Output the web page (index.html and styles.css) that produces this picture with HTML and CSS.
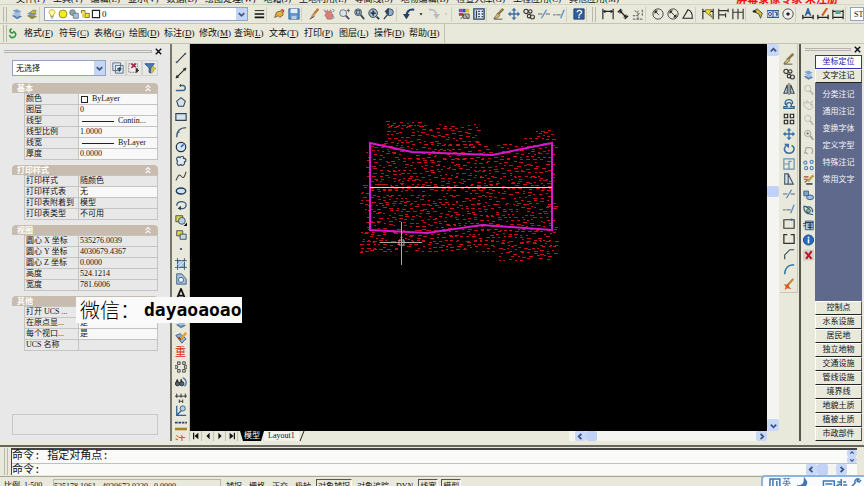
FILE: index.html
```html
<!DOCTYPE html>
<html lang="zh-CN">
<head>
    <meta charset="UTF-8">
    <title>CASS</title>
    <link rel="stylesheet" href="styles.css">
</head>
<body>
    <!-- 图标 -->
    <svg class="defs">
        <symbol id="layers" viewBox="0 0 14 14"><path d="M1 9l6-2 6 3-6 3z" fill="#5b7fae"/><path d="M1 6l6-2 6 3-6 3z" fill="#9db8d8" stroke="#fff" stroke-width=".5"/><path d="M1 3l6-2 6 3-6 3z" fill="#7ea0cc" stroke="#fff" stroke-width=".5"/></symbol>
        <symbol id="layerprev" viewBox="0 0 14 14"><path d="M1 9l5-2 7 3-6 3z" fill="#8a8a40"/><path d="M1 6l6-2 6 3-6 3z" fill="#7ea0cc"/><path d="M5 7c1-5 5-5 7-4l-2 4z" fill="#cbb838" stroke="#555" stroke-width=".6"/></symbol>
        <symbol id="bulb" viewBox="0 0 14 14"><path d="M7 1c5 0 5 5 2 7v2H5V8C2 6 2 1 7 1z" fill="#fff9a0" stroke="#b09020"/><path d="M5 11h4M6 13h2" stroke="#555"/></symbol>
        <symbol id="sun" viewBox="0 0 14 14"><circle cx="7" cy="7" r="5.5" fill="#f4ee20" stroke="#8a8a20" stroke-width="1.3"/></symbol>
        <symbol id="freeze" viewBox="0 0 14 14"><circle cx="5" cy="5" r="4" fill="#90a8a0" stroke="#567"/><path d="M6 6h7v7H6z" fill="#a8c4dc" stroke="#567"/></symbol>
        <symbol id="lock" viewBox="0 0 14 14"><path d="M2 6V2h5v3M7 6h6v6H7z" fill="#eee040" stroke="#887820" stroke-width="1.4"/><path d="M3 6h4v6H3z" fill="#d8cf50"/></symbol>
        <symbol id="swatch" viewBox="0 0 14 14"><path d="M2 2h10v10H2z" fill="#fff" stroke="#222" stroke-width="1.6"/></symbol>
        <symbol id="lines" viewBox="0 0 14 14"><path d="M2 3h11" stroke="#111"/><path d="M2 7h11M2 11h11" stroke="#111" stroke-width="2"/></symbol>
        <symbol id="matchprop" viewBox="0 0 14 14"><path d="M2 11l2-6 6-2 2 5-4 3-2-2z" fill="#e0b040" stroke="#7a5a20"/><path d="M9 1l4 1v4z" fill="#c04030"/></symbol>
        <symbol id="save" viewBox="0 0 14 14"><path d="M1 1h12v12H1z" fill="#5c8fcb" stroke="#345f98"/><path d="M3 1h8v5H3z" fill="#e4eefa"/><path d="M4 9h6v4H4z" fill="#b8cce4"/></symbol>
        <symbol id="brush" viewBox="0 0 14 14"><path d="M12 1L7 7" stroke="#c08030" stroke-width="3"/><path d="M8 6l-3 1-3 6 6-3z" fill="#b8a078"/><path d="M2 13l5-3" stroke="#444"/></symbol>
        <symbol id="pan" viewBox="0 0 14 14"><path d="M1 2l4 3V2l2 3 2-3 1 4 2 2-2 5H5L2 8l2-1z" fill="#d88078" stroke="#a05858" stroke-width=".6"/><path d="M11 1l2 2-2 2M11 9l2 2-2 2" stroke="#446c98" fill="none"/></symbol>
        <symbol id="zoomrt" viewBox="0 0 14 14"><circle cx="6" cy="6" r="4" fill="#d8e4e8" stroke="#667"/><path d="M9 9l4 4" stroke="#446" stroke-width="2"/><path d="M10 3h4M12 1v4" stroke="#456"/></symbol>
        <symbol id="zoomwin" viewBox="0 0 14 14"><circle cx="6" cy="5" r="4" fill="#a8bccc" stroke="#456"/><path d="M4 3h4v4H4z" fill="none" stroke="#345"/><path d="M9 8l4 5" stroke="#345" stroke-width="2"/></symbol>
        <symbol id="zoomall" viewBox="0 0 14 14"><circle cx="6" cy="6" r="5" fill="#a8bccc" stroke="#234"/><path d="M3 6h6M6 3v6" stroke="#123" stroke-width="1.5"/><path d="M10 10l3 3" stroke="#234" stroke-width="2"/></symbol>
        <symbol id="zoomprev" viewBox="0 0 14 14"><circle cx="8" cy="5" r="4" fill="#8fb0d4" stroke="#345"/><path d="M5 8l-4 5M3 4l3-3v6z" stroke="#345" stroke-width="1.6" fill="#345"/></symbol>
        <symbol id="undo" viewBox="0 0 14 14"><path d="M13 2C7 1 4 4 4 11" fill="none" stroke="#23406c" stroke-width="2.4"/><path d="M0 7l4 6 4-6z" fill="#23406c"/></symbol>
        <symbol id="redo" viewBox="0 0 14 14"><path d="M1 2c6-1 9 2 9 9" fill="none" stroke="#b8bcc0" stroke-width="2"/><path d="M6 7l4 6 4-6z" fill="#b8bcc0"/></symbol>
        <symbol id="dot" viewBox="0 0 14 14"><path d="M5 6h4L7 9z" fill="#111"/></symbol>
        <symbol id="dotoff" viewBox="0 0 14 14"><path d="M5 6h4L7 9z" fill="#c4c4bc"/></symbol>
        <symbol id="props" viewBox="0 0 14 14"><path d="M1 1h4v4H1z" fill="#c030c0"/><path d="M5 1h4v4H5z" fill="#3050c0"/><path d="M9 1h4v4H9z" fill="#e0c020"/><path d="M1 6h5v3H1z" fill="#c03020"/><path d="M6 7h7v5H6zM3 13l4-5M12 13L8 8" fill="#b8b8c0" stroke="#444"/></symbol>
        <symbol id="dcenter" viewBox="0 0 14 14"><path d="M1 1h12v12H1z" fill="#dfe8f4" stroke="#246" stroke-width="1.5"/><path d="M4 3v9M6 4h2M10 4h2M6 7h2M10 7h2M6 10h2M10 10h2" stroke="#345" stroke-width="1.5"/></symbol>
        <symbol id="erase" viewBox="0 0 14 14"><path d="M12 1L5 8" stroke="#8a7a50" stroke-width="3"/><path d="M6 6l2 3-4 3H1z" fill="#d8c060" stroke="#765"/><path d="M1 13h10" stroke="#444"/></symbol>
        <symbol id="move" viewBox="0 0 14 14"><path d="M7 1v12M1 7h12" stroke="#3d6ea5" stroke-width="1.6"/><path d="M7 0l3 3H4zM7 14l3-3H4zM0 7l3-3v6zM14 7l-3-3v6z" fill="#3d6ea5"/></symbol>
        <symbol id="copy" viewBox="0 0 14 14"><g fill="none" stroke="#333" stroke-width="1.3"><circle cx="3.5" cy="4" r="2.5"/><circle cx="8.5" cy="4" r="2"/><circle cx="7" cy="9.5" r="2"/><circle cx="11" cy="10.5" r="2.3"/></g></symbol>
        <symbol id="trim" viewBox="0 0 14 14"><path d="M0 7h5M9 7h5" stroke="#456"/><path d="M10 2L4 12" stroke="#5a8cc0" stroke-width="1.5"/></symbol>
        <symbol id="extend" viewBox="0 0 14 14"><path d="M0 8h3M4 8h5" stroke="#456"/><path d="M13 2L9 12" stroke="#5a8cc0" stroke-width="1.5"/></symbol>
        <symbol id="help" viewBox="0 0 14 14"><path d="M1 1h12v12H1z" fill="#2d5f9f" stroke="#1c3f70"/><path d="M5 5c0-3 5-3 5 0 0 2-3 1.5-3 4M7 10v2" stroke="#fff" stroke-width="1.6" fill="none"/></symbol>
        <symbol id="dimlin" viewBox="0 0 14 14"><path d="M1 1v12M13 1v12M1 4h12" stroke="#222" stroke-width="1.3"/><path d="M1 4l3-2v4zM13 4l-3-2v4z" fill="#222"/></symbol>
        <symbol id="dimali" viewBox="0 0 14 14"><path d="M1 5l4-4M9 13l4-4M3 3l8 8" stroke="#222" stroke-width="1.5"/><path d="M3 3h4L3 7zM11 11H7l4-4z" fill="#222"/></symbol>
        <symbol id="dimord" viewBox="0 0 14 14"><path d="M1 13h12M1 9h5l3-3M7 13V3M12 2v8M3 3l4 3" stroke="#444" fill="none" stroke-dasharray="3 1"/></symbol>
        <symbol id="dimrad" viewBox="0 0 14 14"><circle cx="7" cy="7" r="6" fill="none" stroke="#333"/><path d="M4 4l4 4" stroke="#222"/><path d="M3 3h4L3 7z" fill="#222"/></symbol>
        <symbol id="dimdia" viewBox="0 0 14 14"><circle cx="7" cy="7" r="6" fill="none" stroke="#333"/><path d="M4 4l6 6" stroke="#222"/><path d="M3 3h4L3 7zM11 11H7l4-4z" fill="#222"/></symbol>
        <symbol id="dimang" viewBox="0 0 14 14"><path d="M13 12H1L7 2c4 1 5 4 5 9" fill="none" stroke="#222" stroke-width="1.3"/></symbol>
        <symbol id="qdim" viewBox="0 0 14 14"><path d="M1 1v12M13 1v12M1 4h12" stroke="#222" stroke-width="1.3"/><path d="M4 2h7l-2 4 3 5-8-6z" fill="#e8dc30" stroke="#777020"/></symbol>
        <symbol id="dimbase" viewBox="0 0 14 14"><path d="M2 1v12M2 3h11M2 8h8M13 1v4M10 6v5" stroke="#333" stroke-width="1.3"/></symbol>
        <symbol id="dimcont" viewBox="0 0 14 14"><path d="M1 1v12M7 1v12M13 1v12M1 5h12" stroke="#333" stroke-width="1.3"/></symbol>
        <symbol id="leader" viewBox="0 0 14 14"><path d="M1 4l5-3 6 5-2 6-2-5z" fill="#d0c040" stroke="#444"/><path d="M1 4h4" stroke="#222" stroke-width="2"/></symbol>
        <symbol id="toler" viewBox="0 0 14 14"><path d="M0 3h14v8H0zM7 3v8" fill="#d8e8f8" stroke="#2f5f9c" stroke-width="1.3"/><circle cx="3.5" cy="7" r="1.8" fill="none" stroke="#246"/><path d="M9 5h2v4M12 5v4" stroke="#246" fill="none"/></symbol>
        <symbol id="center" viewBox="0 0 14 14"><circle cx="7" cy="7" r="6" fill="#eee" stroke="#444"/><path d="M7 5v4M5 7h4" stroke="#111" stroke-width="1.5"/></symbol>
        <symbol id="dimedit" viewBox="0 0 14 14"><path d="M1 8v5M13 8v5M1 11h12" stroke="#222" stroke-width="1.5"/><path d="M4 9l3-8 3 8M5 6h4" stroke="#2f5f9c" stroke-width="1.8" fill="none"/></symbol>
        <symbol id="dimtedit" viewBox="0 0 14 14"><path d="M1 8v5M13 8v5M1 11h12" stroke="#222" stroke-width="1.5"/><path d="M12 0L6 9" stroke="#d06028" stroke-width="2.5"/></symbol>
        <symbol id="dimupd" viewBox="0 0 14 14"><path d="M1 2v11M13 2v11M1 11h12M1 4h12" stroke="#222" stroke-width="1.3"/><path d="M4 3h6v4H4z" fill="#58a090"/></symbol>
        <symbol id="reload" viewBox="0 0 14 14"><path d="M6 1C2 3 4 7 8 6M8 4l3 3c1 3-2 6-6 5M3 9l2 3" fill="none" stroke="#2f9440" stroke-width="2"/></symbol>
        <symbol id="pickadd" viewBox="0 0 14 14"><path d="M1 1h9v9H1zM4 4h9v9H4z" fill="#e4edf6" stroke="#48617c"/><path d="M6 8h5M8.5 6v5" stroke="#235" stroke-width="1.3"/></symbol>
        <symbol id="select" viewBox="0 0 14 14"><path d="M1 2h10v10H1z" fill="#eee" stroke="#777" stroke-dasharray="2 1"/><path d="M4 2l5 4M9 2L4 7" stroke="#b02040" stroke-width="2"/><path d="M9 6v7l4-3z" fill="#333"/></symbol>
        <symbol id="quick" viewBox="0 0 14 14"><path d="M1 2h11L8 7v6L6 12V7z" fill="#487cb4" stroke="#2c5080"/><path d="M11 5L8 9h3l-2 4 5-6h-3z" fill="#e8d820" stroke="#998a20" stroke-width=".6"/></symbol>

        <symbol id="line" viewBox="0 0 14 14"><path d="M2 12L12 2" stroke="#333" stroke-width="1.2"/><circle cx="2" cy="12" r="1.2" fill="#456a90"/><circle cx="12" cy="2" r="1.2" fill="#456a90"/></symbol>
        <symbol id="xline" viewBox="0 0 14 14"><path d="M1 13L13 1" stroke="#222" stroke-width="1.3"/><path d="M1 13l1-4 3 3zM13 1l-1 4-3-3z" fill="#222"/></symbol>
        <symbol id="pline" viewBox="0 0 14 14"><path d="M1 10h8c4 0 4-6 0-6H7" fill="none" stroke="#3b678a" stroke-width="1.7"/><path d="M7 2v4L5 4z" fill="#333"/></symbol>
        <symbol id="polygon" viewBox="0 0 14 14"><path d="M7 2l5 4-2 6H4L2 6z" fill="#d5e2ee" stroke="#345" stroke-width="1.2"/></symbol>
        <symbol id="rect" viewBox="0 0 14 14"><path d="M1 3h12v8H1z" fill="#d5e2ee" stroke="#345" stroke-width="1.3"/></symbol>
        <symbol id="arc" viewBox="0 0 14 14"><path d="M2 13C2 6 6 2 13 2" fill="none" stroke="#456" stroke-width="1.5"/><circle cx="4" cy="7" r="1.4" fill="#4878a8"/></symbol>
        <symbol id="circle" viewBox="0 0 14 14"><circle cx="7" cy="7" r="5.5" fill="#d5e6f6" stroke="#234" stroke-width="1.4"/><path d="M7 7l3-3" stroke="#26c" stroke-width="2"/></symbol>
        <symbol id="cloud" viewBox="0 0 14 14"><path d="M3 7c-3-3 1-6 3-4 2-3 5-1 4 1 4 0 3 4 1 4 1 4-3 5-4 3-3 3-6-1-4-4z" fill="#e4ecf2" stroke="#345" stroke-width="1.3"/></symbol>
        <symbol id="spline" viewBox="0 0 14 14"><path d="M1 12c2-2 3-9 6-5s4 1 6-5" fill="none" stroke="#444" stroke-width="1.2"/></symbol>
        <symbol id="ellipse" viewBox="0 0 14 14"><ellipse cx="7" cy="7" rx="5.5" ry="3.5" fill="#d0e2ee" stroke="#1f3c58" stroke-width="1.6"/></symbol>
        <symbol id="earc" viewBox="0 0 14 14"><path d="M2 8c0-7 11-6 11-1 0 3-3 5-6 4" fill="none" stroke="#345a80" stroke-width="1.5"/><path d="M7 8v5l-4-2z" fill="#345"/></symbol>
        <symbol id="insert" viewBox="0 0 14 14"><path d="M1 2h8v7H1z" fill="#d6d848" stroke="#444"/><circle cx="8" cy="8" r="4" fill="#b8cfe0" stroke="#345"/><path d="M14 10v4h-4z" fill="#111"/></symbol>
        <symbol id="block" viewBox="0 0 14 14"><path d="M2 2h7v6H2z" fill="#d6d848" stroke="#444"/><path d="M6 6h7v6H6z" fill="#c8d8e4" stroke="#345"/></symbol>
        <symbol id="point" viewBox="0 0 14 14"><circle cx="7" cy="7" r="1.3" fill="#246"/></symbol>
        <symbol id="hatch" viewBox="0 0 14 14"><path d="M3 0v14M11 0v14M0 3h14M0 11h14" stroke="#357"/><path d="M3 3h8v8H3z" fill="#9fc0e0" stroke="#357"/><path d="M3 8l5-5M4 11l7-7" stroke="#fff"/></symbol>
        <symbol id="region" viewBox="0 0 14 14"><path d="M2 1h6l5 6v6H2z" fill="#a8c6e0" stroke="#357"/><circle cx="7" cy="8" r="3" fill="#eef" stroke="#357"/></symbol>
        <symbol id="text" viewBox="0 0 14 14"><path d="M2 13L7 1l5 12M4 9h6" stroke="#111" stroke-width="2" fill="none"/></symbol>
        <symbol id="pencil" viewBox="0 0 14 14"><path d="M1 4l5-2 7 6-5 5z" fill="#8db4d8" stroke="#357"/><path d="M13 1L7 8" stroke="#e0a030" stroke-width="3"/><path d="M4 6l3 3" stroke="#b04020" stroke-width="2"/></symbol>
        <symbol id="nodes" viewBox="0 0 14 14"><g fill="none" stroke="#333"><path d="M3 1h3v3H3zM9 1h3v3H9zM3 10h3v3H3zM9 10h3v3H9zM0 5.5h3v3H0zM11 5.5h3v3h-3z"/></g></symbol>
        <symbol id="find" viewBox="0 0 14 14"><path d="M3 4L1 10M7 4l1 5" stroke="#222" stroke-width="2"/><circle cx="3" cy="9" r="2.5" fill="#567" stroke="#222"/><circle cx="8" cy="9" r="2.5" fill="#567" stroke="#222"/><path d="M9 2c5 2 5 8 2 10" fill="none" stroke="#346ca8" stroke-width="1.4"/></symbol>
        <symbol id="fence" viewBox="0 0 14 14"><path d="M0 6h14M2 3v5M7 3v5M12 3v5M5 10v4M9 10v4M5 12h4" stroke="#222"/></symbol>
        <symbol id="axis" viewBox="0 0 14 14"><path d="M2 1v11h11M2 12l7-7" stroke="#2d6294" stroke-width="1.5" fill="none"/><circle cx="9" cy="4" r="3" fill="#b9d0e5" stroke="#357"/></symbol>
        <symbol id="scalebar" viewBox="0 0 14 14"><path d="M0 3h14" stroke="#247" stroke-width="2" stroke-dasharray="3 1"/><path d="M0 9h14v3H0z" fill="#a58422"/></symbol>

        <symbol id="mirror" viewBox="0 0 14 14"><path d="M5 2v10H1zM9 2v10h4z" fill="#c9dae8" stroke="#345" stroke-width="1.2"/><path d="M7 0v14" stroke="#333"/></symbol>
        <symbol id="offset" viewBox="0 0 14 14"><path d="M1 12h12v-2H9c4-6-8-6-4 0H1zM3 8C0 0 13 0 11 7" fill="none" stroke="#2f6690" stroke-width="1.5"/></symbol>
        <symbol id="array" viewBox="0 0 14 14"><path d="M1.5 1.5h4v4h-4zM8.5 1.5h4v4h-4zM1.5 8.5h4v4h-4zM8.5 8.5h4v4h-4z" fill="none" stroke="#222" stroke-width="1.3"/></symbol>
        <symbol id="rotate" viewBox="0 0 14 14"><path d="M5 2c-6 4-3 10 2 10 6 0 8-7 3-9" fill="none" stroke="#3d6ea5" stroke-width="1.8"/><path d="M1 1h6v5z" fill="#3d6ea5"/></symbol>
        <symbol id="scale" viewBox="0 0 14 14"><path d="M1 1h12v12H1zM1 7h6v6H1zM7 7V4h3" fill="none" stroke="#6c93b0" stroke-width="1.4"/></symbol>
        <symbol id="stretch" viewBox="0 0 14 14"><path d="M2 1h4v12H2zM6 1l6 12H6" fill="#d5e2ee" stroke="#456" stroke-width="1.3"/></symbol>
        <symbol id="breakpt" viewBox="0 0 14 14"><path d="M1 2h12v10H1z" fill="none" stroke="#333" stroke-width="1.3"/><circle cx="10" cy="2" r="1.3" fill="#26c"/></symbol>
        <symbol id="break" viewBox="0 0 14 14"><path d="M5 2H1v10h12V2H9" fill="none" stroke="#333" stroke-width="1.5"/></symbol>
        <symbol id="chamfer" viewBox="0 0 14 14"><path d="M2 13V8l6-6h5" fill="none" stroke="#345" stroke-width="1.3"/></symbol>
        <symbol id="fillet" viewBox="0 0 14 14"><path d="M2 13C2 6 6 2 13 2" fill="none" stroke="#357aa8" stroke-width="1.7"/></symbol>
        <symbol id="explode" viewBox="0 0 14 14"><path d="M4 10L12 1" stroke="#c08838" stroke-width="2.5"/><path d="M1 7l3 1 3-2v4l3 3-5-1-3 2 1-4z" fill="#e05828"/></symbol>
        <symbol id="zoomoff" viewBox="0 0 14 14"><circle cx="6" cy="5" r="4" fill="none" stroke="#b4b4a8"/><path d="M9 8l4 5" stroke="#b4b4a8" stroke-width="2"/></symbol>
        <symbol id="panoff" viewBox="0 0 14 14"><path d="M1 3l4 2V1l3 4 4-3-2 5 3 3-4 3-5-2-3-4zM9 6l4 1" fill="none" stroke="#b4b4a8"/></symbol>
        <symbol id="zoomplus" viewBox="0 0 14 14"><circle cx="6" cy="5" r="4" fill="none" stroke="#998"/><path d="M4 5h4M6 3v4" stroke="#777"/><path d="M9 8l4 5" stroke="#998" stroke-width="2"/></symbol>
        <symbol id="undooff" viewBox="0 0 14 14"><path d="M2 12l2-8h6c3 2 3 5 1 8M2 9l4 3" fill="none" stroke="#aaa89c" stroke-width="1.5"/></symbol>
        <symbol id="rings" viewBox="0 0 14 14"><g fill="#dfeaf4" stroke="#3d78ac" stroke-width="1.3"><circle cx="3" cy="4" r="2"/><circle cx="11" cy="3" r="2"/><circle cx="4" cy="11" r="2"/><circle cx="11" cy="11" r="2"/></g></symbol>
        <symbol id="edit" viewBox="0 0 14 14"><path d="M1 3h6M1 6h5M2 10l4-3" stroke="#b04028" stroke-width="1.5"/><path d="M13 1L6 9" stroke="#c0a048" stroke-width="3"/><path d="M4 12h8" stroke="#345" stroke-width="2"/></symbol>
        <symbol id="solid" viewBox="0 0 14 14"><path d="M1 2h6v6H1z" fill="#7ca4cc" stroke="#357"/><ellipse cx="9" cy="10" rx="4.5" ry="3" fill="#9cc0e2" stroke="#247"/></symbol>
        <symbol id="link" viewBox="0 0 14 14"><path d="M1 2l4 1 3 3M5 11l8 2M1 2c0 6 3 10 8 10M4 4c5-3 9 1 8 6" fill="none" stroke="#2f5f80" stroke-width="1.5"/><circle cx="7" cy="8" r="2.5" fill="#8cb890" stroke="#345"/></symbol>
        <symbol id="table" viewBox="0 0 14 14"><path d="M3 2h10v11H3z" fill="#b8cce0" stroke="#246"/><path d="M3 4h10M6 7h6M6 10h6M9 4v9" stroke="#246" stroke-width="1.5"/><path d="M0 5h4M0 8h4" stroke="#333"/></symbol>
        <symbol id="info" viewBox="0 0 14 14"><circle cx="7" cy="7" r="6.5" fill="#2468c8" stroke="#143c80"/><path d="M7 3v2M7 6v5" stroke="#fff" stroke-width="2"/></symbol>
        <symbol id="delete" viewBox="0 0 14 14"><path d="M0 0h14v14H0z" fill="#d4d0c8"/><path d="M3 3l8 9M11 2L4 12" stroke="#b81820" stroke-width="2.6"/></symbol>

        <symbol id="up" viewBox="0 0 10 10"><path d="M2 6l3-3 3 3" fill="none" stroke="#3b5580" stroke-width="2"/></symbol>
        <symbol id="down" viewBox="0 0 10 10"><path d="M2 4l3 3 3-3" fill="none" stroke="#3b5580" stroke-width="2"/></symbol>
        <symbol id="left" viewBox="0 0 10 10"><path d="M6 2L3 5l3 3" fill="none" stroke="#3b5580" stroke-width="2"/></symbol>
        <symbol id="right" viewBox="0 0 10 10"><path d="M4 2l3 3-3 3" fill="none" stroke="#3b5580" stroke-width="2"/></symbol>
        <symbol id="collapse" viewBox="0 0 10 10"><path d="M2 5l3-3 3 3M2 9l3-3 3 3" fill="none" stroke="#fff" stroke-width="1.3"/></symbol>
        <symbol id="close" viewBox="0 0 10 10"><path d="M2 2l6 6M8 2L2 8" stroke="#111" stroke-width="1.6"/></symbol>
        <symbol id="first" viewBox="0 0 10 10"><path d="M2 1v8" stroke="#111" stroke-width="1.5"/><path d="M8 1v8L3 5z" fill="#111"/></symbol>
        <symbol id="prev" viewBox="0 0 10 10"><path d="M7 1v8L3 5z" fill="#111"/></symbol>
        <symbol id="nextp" viewBox="0 0 10 10"><path d="M3 1v8l4-4z" fill="#111"/></symbol>
        <symbol id="last" viewBox="0 0 10 10"><path d="M8 1v8" stroke="#111" stroke-width="1.5"/><path d="M2 1v8l5-4z" fill="#111"/></symbol>
    </svg>

    <div class="menubar top">
        <button>文件(F)</button><button>工具(T)</button><button>编辑(E)</button><button>显示(V)</button><button>数据(D)</button><button>绘图处理(W)</button><button>地籍(J)</button><button>土地利用(L)</button><button>等高线(S)</button><button>地物编辑(B)</button><button>检查入库(G)</button><button>工程应用(C)</button><button>其他应用(M)</button>
        <span class="trial">屏幕录像专家 未注册</span>
    </div>

    <div class="toolbar">
        <span class="grip"></span>
        <div class="tools" data-icons="layers layerprev"></div>
        <label class="combo layer">
            <span class="state" data-icons="bulb sun freeze lock swatch"></span>
            <select aria-label="图层"><option>0</option></select>
            <svg class="arrow"><use href="#down"/></svg>
        </label>
        <div class="tools" data-icons="lines"></div>
        <div class="tools" data-icons="matchprop save"></div>
        <div class="tools" data-icons="brush pan zoomrt zoomwin zoomall zoomprev"></div>
        <div class="tools" data-icons="undo dot redo dotoff"></div>
        <div class="tools" data-icons="props dcenter"></div>
        <div class="tools" data-icons="erase move copy trim extend"></div>
        <div class="tools" data-icons="help"></div>
        <span class="grip"></span>
        <div class="tools" data-icons="dimlin dimali dimord"></div>
        <div class="tools" data-icons="dimrad dimdia dimang"></div>
        <div class="tools" data-icons="qdim dimbase dimcont"></div>
        <div class="tools" data-icons="leader toler center"></div>
        <div class="tools" data-icons="dimedit dimtedit dimupd"></div>
        <input class="style" aria-label="标注样式" value="STANDARD">
    </div>

    <div class="menubar cass">
        <span class="grip"></span>
        <svg class="logo"><use href="#reload"/></svg>
        <div class="menus">
            <button>格式(<u>F</u>)</button><button>符号(<u>C</u>)</button><button>表格(<u>G</u>)</button><button>绘图(<u>D</u>)</button><button>标注(<u>D</u>)</button><button>修改(<u>M</u>)</button><button>查询(<u>L</u>)</button><button>文本(<u>T</u>)</button><button>打印(<u>P</u>)</button><button>图层(<u>L</u>)</button><button>操作(<u>D</u>)</button><button>帮助(<u>H</u>)</button>
        </div>
    </div>

    <div class="main">
        <!-- 特性 -->
        <div class="props">
            <div class="caption"><i></i><button aria-label="关闭"><svg><use href="#close"/></svg></button></div>
            <div class="pick">
                <label class="combo">
                    <select aria-label="选择"><option>无选择</option></select>
                    <svg class="arrow"><use href="#down"/></svg>
                </label>
                <div class="tools" data-icons="pickadd select quick"></div>
            </div>
            <section>
                <h2>基本<svg><use href="#collapse"/></svg></h2>
                <table>
                    <tr><th>颜色</th><td><b class="box"></b>ByLayer</td></tr>
                    <tr><th>图层</th><td>0</td></tr>
                    <tr><th>线型</th><td><b class="rule"></b>Contin...</td></tr>
                    <tr><th>线型比例</th><td>1.0000</td></tr>
                    <tr><th>线宽</th><td><b class="rule"></b>ByLayer</td></tr>
                    <tr><th>厚度</th><td>0.0000</td></tr>
                </table>
            </section>
            <section>
                <h2>打印样式<svg><use href="#collapse"/></svg></h2>
                <table>
                    <tr><th>打印样式</th><td class="off">随颜色</td></tr>
                    <tr><th>打印样式表</th><td>无</td></tr>
                    <tr><th>打印表附着到</th><td class="off">模型</td></tr>
                    <tr><th>打印表类型</th><td class="off">不可用</td></tr>
                </table>
            </section>
            <section>
                <h2>视图<svg><use href="#collapse"/></svg></h2>
                <table>
                    <tr><th>圆心 X 坐标</th><td class="off">535276.0039</td></tr>
                    <tr><th>圆心 Y 坐标</th><td class="off">4030679.4367</td></tr>
                    <tr><th>圆心 Z 坐标</th><td class="off">0.0000</td></tr>
                    <tr><th>高度</th><td class="off">524.1214</td></tr>
                    <tr><th>宽度</th><td class="off">781.6006</td></tr>
                </table>
            </section>
            <section>
                <h2>其他<svg><use href="#collapse"/></svg></h2>
                <table>
                    <tr><th>打开 UCS ...</th><td></td></tr>
                    <tr><th>在原点显...</th><td>是</td></tr>
                    <tr><th>每个视口...</th><td>是</td></tr>
                    <tr><th>UCS 名称</th><td class="off"></td></tr>
                </table>
            </section>
            <div class="hint"></div>
        </div>

        <div class="side draw">
            <div class="tools" data-icons="line xline pline polygon rect arc circle cloud spline ellipse earc insert block point hatch region text pencil layers pencil"></div>
            <button class="word">重</button>
            <div class="tools short" data-icons="nodes find fence axis scalebar"></div>
            <button class="word">注</button>
        </div>

        <div class="view">
            <div class="canvas">
                <svg id="map" width="577" height="387">
                    <path id="dashes"/>
                    <path class="bound" d="M180 99l42 9 80 3 60-12v87l-70-5-55 8-57-3z"/>
                    <path class="axis" d="M180 143.5h182"/>
                    <path class="cursor" d="M190 198.5h42M211.5 178v43M209 196h5v5h-5z"/>
                </svg>
            </div>
            <div class="vbar">
                <button aria-label="上"><svg><use href="#up"/></svg></button>
                <span class="thumb"></span>
                <button aria-label="下"><svg><use href="#down"/></svg></button>
            </div>
            <div class="sheets">
                <button class="nav" aria-label="首"><svg><use href="#first"/></svg></button>
                <button class="nav" aria-label="前"><svg><use href="#prev"/></svg></button>
                <button class="nav" aria-label="后"><svg><use href="#nextp"/></svg></button>
                <button class="nav" aria-label="末"><svg><use href="#last"/></svg></button>
                <button class="sheet on">模型</button>
                <button class="sheet">Layout1</button>
                <svg class="slant" viewBox="0 0 6 10"><path d="M5 0L1 10" stroke="#222"/></svg>
                <div class="hbar">
                    <button aria-label="左"><svg><use href="#left"/></svg></button>
                    <span class="thumb"></span>
                    <button aria-label="右"><svg><use href="#right"/></svg></button>
                </div>
            </div>
        </div>

        <div class="side modify">
            <div class="tools" data-icons="erase copy mirror offset array move rotate scale stretch trim extend breakpt break chamfer fillet explode"></div>
        </div>

        <!-- 屏幕菜单 -->
        <div class="screen">
            <div class="caption"><i></i><button aria-label="关闭"><svg><use href="#close"/></svg></button></div>
            <div class="cols">
                <div class="tools" data-icons="layers zoomoff panoff zoomoff zoomplus undooff rings edit solid link table info delete"></div>
                <div class="menu">
                    <button class="current">坐标定位</button>
                    <button class="open">文字注记</button>
                    <ul>
                        <li><a href="#">分类注记</a></li>
                        <li><a href="#">通用注记</a></li>
                        <li><a href="#">变换字体</a></li>
                        <li><a href="#">定义字型</a></li>
                        <li><a href="#">特殊注记</a></li>
                        <li><a href="#">常用文字</a></li>
                    </ul>
                    <button>控制点</button>
                    <button>水系设施</button>
                    <button>居民地</button>
                    <button>独立地物</button>
                    <button>交通设施</button>
                    <button>管线设施</button>
                    <button>境界线</button>
                    <button>地貌土质</button>
                    <button>植被土质</button>
                    <button>市政部件</button>
                </div>
            </div>
        </div>
    </div>

    <div class="command">
        <span class="grip"></span>
        <div class="lines">
            <div class="log">
                <p>命令: 指定对角点:</p>
                <div class="spin"><button aria-label="上"><svg><use href="#up"/></svg></button><button aria-label="下"><svg><use href="#down"/></svg></button></div>
            </div>
            <div class="prompt">
                <label for="cmd">命令:</label><input id="cmd">
                <div class="hbar">
                    <button aria-label="左"><svg><use href="#left"/></svg></button>
                    <span class="thumb"></span>
                    <button aria-label="右"><svg><use href="#right"/></svg></button>
                </div>
            </div>
        </div>
    </div>

    <div class="status">
        <span class="ratio">比例&nbsp; 1:500</span>
        <span class="coord">535178.1061,&nbsp; 4030673.0220,&nbsp; 0.0000</span>
        <button>捕捉</button><button>栅格</button><button>正交</button><button>极轴</button><button class="on">对象捕捉</button><button>对象追踪</button><button>DYN</button><button class="on">线宽</button><button class="on">模型</button>
    </div>

    <div class="ime">
        <svg viewBox="0 0 100 12">
            <g fill="none" stroke="#3f78b0" stroke-width="1.5">
                <path d="M5 2h10v10H5zM8 2v10M12 4v8"/>
                <path d="M40 2c0 4-2 7-6 7 4 3 8 0 8-4z" fill="#3f78b0"/>
                <path d="M59 4h11v7H59zM61 7h7"/>
                <path d="M77 2v9M73 5h4M72 9l4-2M79 5h3M79 8h4"/>
                <path d="M86 11l5-5c-1-3 2-5 4-4l-2 2 2 1 2-2"/>
            </g>
        </svg>
        <span>英</span>
    </div>

    <div class="mark"><span>微信：</span><b>dayaoaoao</b></div>

    <script src="main.js"></script>
</body>
</html>
```
FILE: styles.css
```css
*{
    margin: 0;
    padding: 0;
    box-sizing: border-box;
}
body{
    display: flex;
    flex-direction: column;
    height: 100vh;
    overflow: hidden;
    position: relative;
    background: #e8e8db;
    color: #111;
    font: 8px/11px "Liberation Serif", "Noto Sans CJK SC", serif;
}
button, input, select{
    font: inherit;
    color: inherit;
    border: 0;
    background: none;
    white-space: nowrap;
}
svg{
    display: block;
}
.defs{
    position: absolute;
    width: 0;
    height: 0;
}
.grip{
    flex: none;
    width: 4px;
    border-left: 1px solid #b8b8a8;
    border-right: 1px solid #b8b8a8;
}
.tools{
    display: flex;
    flex: none;
}
.tools button{
    flex: none;
    width: 15px;
    height: 15px;
    display: flex;
    align-items: center;
    justify-content: center;
}
.tools svg{
    width: 12px;
    height: 12px;
}

/* 菜单 */
.menubar{
    display: flex;
    flex: none;
    font-size: 9px;
}
.top{
    height: 5px;
    align-items: flex-end;
    gap: 8px;
    padding-left: 16px;
    overflow: hidden;
    border-bottom: 1px solid #d4d4c4;
}
.top button{
    line-height: 9px;
}
.top .trial{
    margin-left: auto;
    margin-right: 26px;
    font-size: 11px;
    line-height: 10px;
    font-weight: bold;
    color: #f01010;
}
.toolbar{
    display: flex;
    flex: none;
    align-items: center;
    height: 19px;
    padding-left: 3px;
    overflow: hidden;
    border-bottom: 1px solid #c4c4b4;
}
.toolbar .grip{
    height: 15px;
    margin-right: 2px;
}
.toolbar .tools + .grip{
    margin: 0 4px 0 5px;
}
.toolbar .tools + .tools,
.toolbar .tools + .style{
    margin-left: 4px;
}
.toolbar .tools{
    border-right: 1px solid #d0d0c0;
}
.toolbar .i-dot,
.toolbar .i-dotoff{
    width: 10px;
}
.combo{
    display: block;
    position: relative;
    border: 1px solid #8fa4c0;
    background: #fff;
}
.combo select{
    display: block;
    width: 100%;
    height: 100%;
    padding-left: 3px;
    appearance: none;
}
.combo .arrow{
    position: absolute;
    top: 0;
    right: 0;
    width: 11px;
    height: 100%;
    padding: 0 1px;
    background: #c5d5f6;
    pointer-events: none;
}
.layer{
    flex: none;
    width: 204px;
    height: 14px;
    margin: 0 3px 0 4px;
}
.layer select{
    padding-left: 57px;
    font-size: 9px;
}
.layer .state{
    position: absolute;
    left: 2px;
    top: 1px;
    display: flex;
}
.state button{
    width: 11px;
    height: 10px;
}
.state svg{
    width: 10px;
    height: 10px;
}
.style{
    flex: 1;
    min-width: 0;
    height: 14px;
    padding-left: 3px;
    border: 1px solid #8fa4c0;
    background: #fff;
}
.cass{
    align-items: center;
    height: 20px;
    padding-left: 3px;
    border-bottom: 1px solid #c4c4b4;
}
.cass .grip{
    height: 17px;
}
.logo{
    width: 11px;
    height: 11px;
    margin-right: 6px;
}
.menus{
    display: grid;
    grid-auto-flow: column;
    grid-auto-columns: 35px;
    align-items: center;
    height: 100%;
    border-right: 1px solid #c0c0b0;
}
.menus button{
    text-align: left;
}

.main{
    display: flex;
    flex: 1;
    min-height: 0;
    margin-bottom: 4px;
    overflow: hidden;
}
.caption{
    display: flex;
    align-items: center;
    gap: 2px;
    height: 12px;
}
.caption i{
    flex: 1;
    height: 3px;
    border: 1px solid #b4b4ac;
    border-left: 0;
}
.caption svg{
    width: 9px;
    height: 9px;
}

/* 特性 */
.props{
    display: flex;
    flex-direction: column;
    flex: none;
    width: 172px;
    padding: 1px 12px 6px 12px;
    background: #e8e8e8;
    border-right: 2px solid #77776c;
}
.props .caption{
    margin: 0 -5px 3px -8px;
}
.pick{
    display: flex;
    align-items: center;
    gap: 4px;
    margin-bottom: 7px;
}
.pick .combo{
    flex: 1;
    height: 16px;
}
.pick .tools button{
    width: 16px;
    height: 16px;
    border: 1px solid #d4d4cc;
}
section{
    margin-bottom: 5px;
}
h2{
    display: flex;
    align-items: center;
    justify-content: space-between;
    height: 10px;
    padding: 0 6px 0 5px;
    border-radius: 4px 4px 0 0;
    background: #c8bcae;
    color: #fff;
    font-size: 8px;
}
h2 svg{
    width: 8px;
    height: 8px;
}
table{
    width: calc(100% - 12px);
    margin-left: 12px;
    border-collapse: collapse;
    table-layout: fixed;
}
th, td{
    height: 11px;
    border: 1px solid #c4c4c0;
    font-weight: normal;
    text-align: left;
    line-height: 10px;
    white-space: nowrap;
    overflow: hidden;
}
th{
    width: 54px;
    padding-left: 1px;
}
td{
    padding-left: 1px;
    background: #f8f8f8;
}
.off{
    background: #e8e8e8;
}
.box{
    display: inline-block;
    width: 7px;
    height: 7px;
    margin: 0 4px 0 1px;
    border: 1px solid #222;
    vertical-align: middle;
}
.rule{
    display: inline-block;
    width: 32px;
    height: 1px;
    margin: 0 4px 0 2px;
    background: #222;
    vertical-align: middle;
}
.hint{
    height: 21px;
    margin-top: auto;
    border: 1px solid #c8c8c8;
}

/* 竖向工具栏 */
.side{
    flex: none;
    width: 18px;
    padding-top: 7px;
    border-right: 1px solid #c8c8b8;
}
.draw{
    display: flex;
    flex-direction: column;
    align-items: center;
    margin-bottom: -7px;
}
.side .tools,
.cols .tools{
    flex-direction: column;
    align-items: center;
}
.draw .tools{
    flex: 20 1 0;
    min-height: 0;
}
.draw .short{
    flex-grow: 5;
}
.draw .tools button,
.word{
    flex: 1 1 0;
    min-height: 0;
}
.word{
    font-size: 11px;
    line-height: 14px;
    color: #e02820;
}
.modify{
    height: 249px;
    margin: 0 1px;
    border-bottom: 1px solid #c8c8b8;
}
.modify .tools button{
    width: 16px;
}

/* 绘图区 */
.view{
    display: grid;
    flex: 1;
    min-width: 0;
    grid-template: minmax(0, 1fr) 10px / minmax(0, 1fr) 12px;
}
.canvas{
    overflow: hidden;
    background: #000;
}
#dashes{
    fill: none;
    stroke: #c41018;
}
.bound{
    fill: none;
    stroke: #d818d0;
    stroke-width: 2;
}
.axis{
    stroke: #d8d8c8;
}
.cursor{
    fill: none;
    stroke: #a8a8a8;
}
.vbar, .hbar{
    display: flex;
    background: #f4f4f0;
}
.vbar{
    flex-direction: column;
}
.vbar button, .hbar button, .spin button{
    display: flex;
    align-items: center;
    justify-content: center;
    flex: none;
    background: #cad8f8;
    border-radius: 2px;
}
.vbar button{
    height: 12px;
}
.vbar svg, .hbar svg{
    width: 9px;
    height: 9px;
}
.hbar button{
    width: 11px;
}
.thumb{
    background: #c2d2f6;
    border-radius: 2px;
}
.vbar .thumb{
    height: 11px;
    margin: 130px 0 auto;
}
.hbar .thumb{
    width: 11px;
    margin-right: auto;
}
.sheets{
    grid-column: 1 / 3;
    display: flex;
    background: #e8e8db;
    line-height: 10px;
}
.nav{
    display: flex;
    align-items: center;
    justify-content: center;
    width: 12px;
    border-right: 1px solid #c0c0b0;
}
.nav svg{
    width: 8px;
    height: 8px;
}
.sheet{
    padding: 0 4px;
    background: #f4f4ee;
}
.sheet.on{
    margin-left: 2px;
    background: #000;
    color: #fff;
    clip-path: polygon(0 0, 100% 0, calc(100% - 3px) 100%, 3px 100%);
}
.slant{
    width: 6px;
    height: 10px;
}
.sheets .hbar{
    width: 198px;
    margin-left: auto;
    margin-right: 12px;
    padding-left: 6px;
}

/* 屏幕菜单 */
.screen{
    display: flex;
    flex-direction: column;
    flex: none;
    width: 65px;
    border-left: 2px solid #55554c;
}
.screen .caption{
    flex: none;
    height: 11px;
    padding: 0 2px 0 4px;
}
.cols{
    display: flex;
    flex: 1;
    min-height: 0;
    padding-right: 2px;
}
.cols .tools{
    width: 14px;
    padding-top: 12px;
}
.cols .tools svg{
    width: 11px;
}
.menu{
    display: flex;
    flex: 1;
    flex-direction: column;
}
.menu button{
    flex: none;
    height: 14px;
    line-height: 12px;
    border: 1px solid #fff;
    border-right-color: #555;
    border-bottom: 1px solid #222;
}
.menu .current{
    background: #fff;
    border: 1px solid #3030b0;
    color: #2020a0;
}
.menu ul{
    flex: 1;
    padding-top: 3px;
    list-style: none;
    background: #5f698c;
    text-align: center;
}
.menu li{
    height: 17px;
    line-height: 17px;
}
.menu a{
    color: #f4f4f8;
    text-decoration: none;
}

/* 命令行 */
.command{
    display: flex;
    flex: none;
    gap: 3px;
    padding: 1px 7px 1px 4px;
    border-top: 2px solid #66665c;
    font: 11px/12px "Liberation Mono", "Noto Sans CJK SC", monospace;
}
.lines{
    flex: 1;
    min-width: 0;
    border-left: 1px solid #444;
    border-top: 2px solid #444;
    background: #fafaf8;
}
.log, .prompt{
    display: flex;
    justify-content: space-between;
}
.log{
    height: 14px;
    border-bottom: 1px solid #c0c0c0;
}
.prompt{
    height: 11px;
}
#cmd{
    flex: 1;
    min-width: 0;
    outline: 0;
}
.spin{
    display: flex;
    flex-direction: column;
    width: 10px;
}
.spin button{
    flex: 1;
}
.spin svg{
    width: 6px;
    height: 6px;
}
.prompt .hbar{
    width: 41px;
    margin-right: 10px;
}

/* 状态栏 */
.status{
    display: flex;
    flex: none;
    gap: 3px;
    height: 10px;
    padding: 2px 0 0 4px;
    overflow: hidden;
    line-height: 14px;
    border-top: 1px solid #a8a898;
}
.status button{
    flex: none;
    height: 16px;
    padding: 0 1px;
    line-height: 14px;
    border: 1px solid transparent;
}
.status .on{
    border-color: #555 #fff #fff #555;
}
.ratio{
    width: 46px;
}
.coord{
    width: 168px;
    height: 14px;
    border: 1px solid #b8b8a8;
}
.ime{
    position: absolute;
    right: 0;
    bottom: 0;
    width: 103px;
    height: 11px;
    padding-left: 2px;
    border: 2px solid #8cb4dc;
    border-bottom: 0;
    border-right: 0;
    border-radius: 4px 0 0 0;
    background: #f8fbff;
    overflow: hidden;
}
.ime svg{
    width: 100%;
    height: 12px;
}
.ime span{
    position: absolute;
    left: 19px;
    top: 1px;
    color: #2f68a0;
    font-size: 9px;
}

/* 水印 */
.mark{
    position: absolute;
    left: 76px;
    top: 297px;
    display: flex;
    align-items: center;
    gap: 4px;
    height: 26px;
    padding-left: 4px;
    background: #fafafa;
    color: #000;
    font: 20px/26px "Noto Sans CJK SC", sans-serif;
}
.mark span{
    font-weight: 300;
}
.mark b{
    font: bold 18px/26px "DejaVu Sans Mono", monospace;
}
```
FILE: main.js
```js
// 工具栏按钮
var aBar = document.querySelectorAll('[data-icons]');
for(var i = 0;i < aBar.length;i++){
    var aName = aBar[i].getAttribute('data-icons').split(' ');
    var sHtml = '';
    for(var j = 0;j < aName.length;j++){
        sHtml += '<button class="i-' + aName[j] + '" aria-label="' + aName[j] + '"><svg><use href="#' + aName[j] + '"/></svg></button>';
    }
    aBar[i].innerHTML = sHtml;
}

// 高程点: 每段 [y起, y止, x起, x止]
var aZone = [
    [77, 82, 196, 238], [80, 100, 194, 290], [85, 94, 345, 366], [94, 100, 332, 367],
    [100, 112, 176, 368], [112, 140, 175, 366], [140, 160, 170, 366],
    [160, 186, 175, 368], [186, 196, 170, 366], [196, 206, 168, 310],
    [206, 209, 168, 208], [196, 216, 308, 369]
];
var seed = 7;
function rnd(){
    seed = (seed * 16807) % 2147483647;
    return seed / 2147483647;
}
var d = '';
for(var k = 0;k < aZone.length;k++){
    var z = aZone[k];
    for(var y = z[0];y < z[1];y += 3){
        var x = z[2] + rnd() * 5;
        while(x < z[3] - 3){
            var len = 2 + Math.floor(rnd() * 3);
            if(rnd() > 0.12){
                d += 'M' + Math.round(x) + ' ' + (y + Math.floor(rnd() * 3) + 0.5) + 'h' + len;
            }
            x += len + 2 + rnd() * 2;
        }
    }
}
document.getElementById('dashes').setAttribute('d', d);
```
